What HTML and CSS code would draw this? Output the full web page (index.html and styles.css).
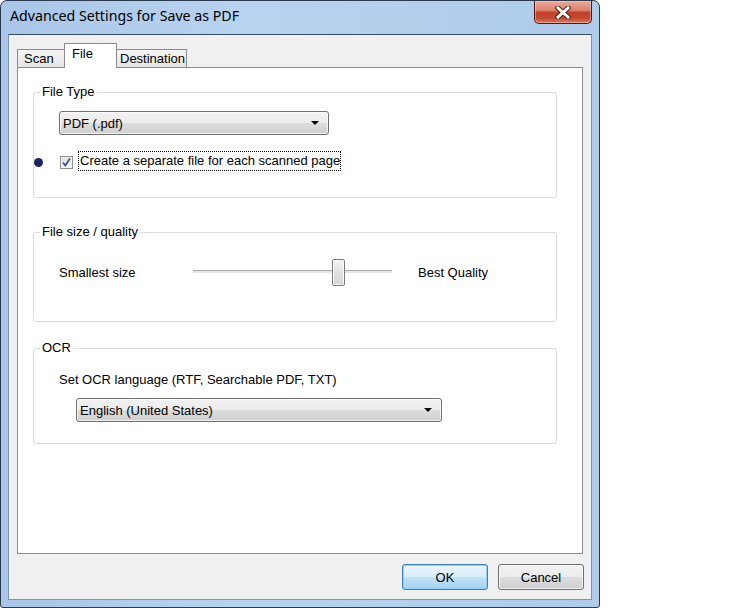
FILE: index.html
```html
<!DOCTYPE html>
<html lang="en">
<head>
  <meta charset="UTF-8">
  <title>Advanced Settings for Save as PDF</title>
  <link rel="stylesheet" href="styles.css">
</head>
<body>
  <div class="window">
    <!-- title bar -->
    <div class="titlebar">
      <span class="title">Advanced Settings for Save as PDF</span>
      <button class="close" aria-label="Close">
        <svg width="16" height="13" viewBox="0 0 16 13">
          <path d="M3 2 L13 11 M13 2 L3 11" stroke="#4a2019" stroke-width="5" stroke-linecap="square"/>
          <path d="M3 2 L13 11 M13 2 L3 11" stroke="#ffffff" stroke-width="3" stroke-linecap="square"/>
        </svg>
      </button>
    </div>

    <div class="client">
      <!-- tabs -->
      <div class="tabs">
        <div class="tab tab-scan">Scan</div>
        <div class="tab tab-file active">File</div>
        <div class="tab tab-dest">Destination</div>
      </div>

      <div class="panel">
        <fieldset class="group group-type">
          <legend>File Type</legend>
          <div class="select select-type">
            <span>PDF (.pdf)</span>
            <i class="arrow"></i>
          </div>
          <div class="check-row">
            <span class="focus-dot"></span>
            <span class="checkbox">
              <svg width="11" height="11" viewBox="0 0 11 11">
                <path d="M2 5.5 L4.3 8.5 L9 1.5" fill="none" stroke="#3a5191" stroke-width="1.7"/>
              </svg>
            </span>
            <span class="check-label">Create a separate file for each scanned page</span>
          </div>
        </fieldset>

        <fieldset class="group group-size">
          <legend>File size / quality</legend>
          <div class="slider-row">
            <span class="slider-label">Smallest size</span>
            <div class="slider">
              <span class="thumb" style="margin-left: 139px"></span>
            </div>
            <span>Best Quality</span>
          </div>
        </fieldset>

        <fieldset class="group group-ocr">
          <legend>OCR</legend>
          <div class="ocr-text">Set OCR language (RTF, Searchable PDF, TXT)</div>
          <div class="select select-lang">
            <span>English (United States)</span>
            <i class="arrow"></i>
          </div>
        </fieldset>
      </div>

      <!-- buttons -->
      <div class="buttons">
        <button class="btn btn-ok">OK</button>
        <button class="btn">Cancel</button>
      </div>
    </div>
  </div>
</body>
</html>
```

FILE: styles.css
```css
:root {
  --frame-edge: #2c3a4e;
  --client-bg:  #f0f0f0;
  --tab-border: #898c95;
  --group-line: #d8dcdf;
  --font-ui:    'Liberation Sans', Arial, sans-serif;
  --font-title: 'Noto Sans', 'Open Sans', sans-serif;
}
*, *::before, *::after { box-sizing: border-box; }
body {
  margin: 0;
  background: #ffffff;
  font-family: var(--font-ui);
  font-size: 13px;
  color: #000;
}

/* window frame */
.window {
  width: 600px; height: 608px;
  border: 1px solid var(--frame-edge);
  border-radius: 7px 7px 3px 3px;
  background: linear-gradient(90deg, #a9c6e8, #b8d3ef 40%, #aecbea);
  padding: 0 7px 7px;
  display: flex; flex-direction: column;
}
.titlebar {
  height: 33px;
  display: flex; justify-content: space-between; align-items: flex-start;
  padding-left: 2px;
}
.title {
  font-family: var(--font-title);
  font-size: 14.2px;
  line-height: 20px;
  padding-top: 5px;
}
.close {
  width: 58px; height: 23px;
  margin: 0; padding: 0;
  border: 1px solid #4d1a12; border-top: none;
  border-radius: 0 0 5px 5px;
  background: linear-gradient(#eaa898 0%, #dc8470 42%, #c2422b 52%, #c44830 78%, #dd7a5f 100%);
  box-shadow: inset 0 0 0 1px rgba(255,220,210,.45);
  display: flex; align-items: center; justify-content: center;
}

.client {
  flex: 1;
  display: flex; flex-direction: column;
  background: var(--client-bg);
  border: 1px solid #7d94b0;
  border-top-color: #3b4b63;
  padding: 8px 8px 9px;
}

/* tabs */
.tabs {
  height: 24px;
  display: flex; align-items: flex-end;
  position: relative; z-index: 1;
}
.tab {
  height: 18px;
  padding-top: 1px;
  border: 1px solid var(--tab-border);
  border-bottom: none;
  background: linear-gradient(#f4f4f4, #e6e6e6);
  margin-right: -1px;
  line-height: 15px;
  white-space: nowrap;
}
.tab-scan { width: 48px; padding-left: 6px; }
.tab-file { width: 53px; padding-left: 7px; }
.tab-dest { width: 71px; padding-left: 3px; }
.tab.active {
  height: 25px;
  margin-bottom: -1px;
  padding-top: 2px;
  background: #ffffff;
}
.panel {
  height: 487px;
  border: 1px solid var(--tab-border);
  background: #ffffff;
  padding-top: 17px;
}

/* group boxes */
.group {
  margin: 0 25px 0 15px;
  padding: 0;
  border: 1px solid var(--group-line);
  border-radius: 3px;
}
.group legend {
  margin-left: 6px;
  padding: 0 2px;
  line-height: 14px;
}
.group-type { padding-bottom: 26px; }
.group-size { margin-top: 27px; padding: 20px 0 35px; }
.group-ocr  { margin-top: 19px; padding-bottom: 21px; }

/* dropdowns */
.select {
  height: 24px;
  display: flex; align-items: center; justify-content: space-between;
  padding: 0 9px 0 3px;
  border: 1px solid #707070;
  border-radius: 3px;
  background: linear-gradient(#f2f2f2 0%, #ebebeb 50%, #dddddd 51%, #cfcfcf 100%);
  box-shadow: inset 0 0 0 1px rgba(255,255,255,.7);
}
.arrow {
  width: 0; height: 0;
  border-left: 4px solid transparent;
  border-right: 4px solid transparent;
  border-top: 4px solid #000;
}
.select-type { width: 270px; margin: 12px 0 0 25px; }
.select-lang { width: 366px; margin: 11px 0 0 42px; }

/* checkbox row */
.check-row {
  height: 20px;
  margin-top: 16px;
  display: flex; align-items: center;
}
.focus-dot {
  width: 9px; height: 9px;
  border-radius: 50%;
  background: #1b2463;
  margin: 3px 17px 0 0;
}
.checkbox {
  width: 13px; height: 13px;
  border: 1px solid #8e8f8f;
  background: linear-gradient(135deg, #dcdcdc, #fbfbfb);
  box-shadow: inset 0 0 0 1px #f4f4f4;
  display: flex; align-items: center; justify-content: center;
  margin: 2px 5px 0 0;
}
.check-label {
  border: 1px dotted #000;
  padding: 1px 0 1px 1px;
  line-height: 16px;
}

/* slider */
.slider-row {
  height: 27px;
  display: flex; align-items: center;
  padding-left: 25px;
}
.slider-label { width: 134px; }
.slider {
  width: 199px; height: 27px;
  margin-right: 26px;
  background:
    linear-gradient(#a9a9a9, #a9a9a9) 0 11px / 100% 1px no-repeat,
    linear-gradient(#e6e6e6, #e6e6e6) 0 12px / 100% 2px no-repeat;
  display: flex;
}
.thumb {
  width: 13px; height: 27px;
  border: 1px solid #7b7b7b;
  border-radius: 2px;
  background: linear-gradient(#f3f3f3, #e2e2e2 50%, #d6d6d6);
  box-shadow: inset 0 0 0 1px #fbfbfb;
}

/* OCR */
.ocr-text {
  margin: 17px 0 0 25px;
  line-height: 15px;
}

/* bottom buttons */
.buttons {
  margin: 10px -1px 0 0;
  display: flex; justify-content: flex-end; gap: 10px;
}
.btn {
  width: 86px; height: 26px;
  font-family: var(--font-ui);
  font-size: 13px;
  border: 1px solid #707070;
  border-radius: 3px;
  background: linear-gradient(#f2f2f2 0%, #ebebeb 50%, #dddddd 51%, #cfcfcf 100%);
  box-shadow: inset 0 0 0 1px rgba(255,255,255,.7);
  padding: 0;
}
.btn-ok {
  border-color: #3c7fb1;
  background: linear-gradient(#eaf5fc 0%, #d9edfa 50%, #bfe1f7 51%, #a8d4f1 100%);
  box-shadow: inset 0 0 0 1px #8fd0f4;
}
```
